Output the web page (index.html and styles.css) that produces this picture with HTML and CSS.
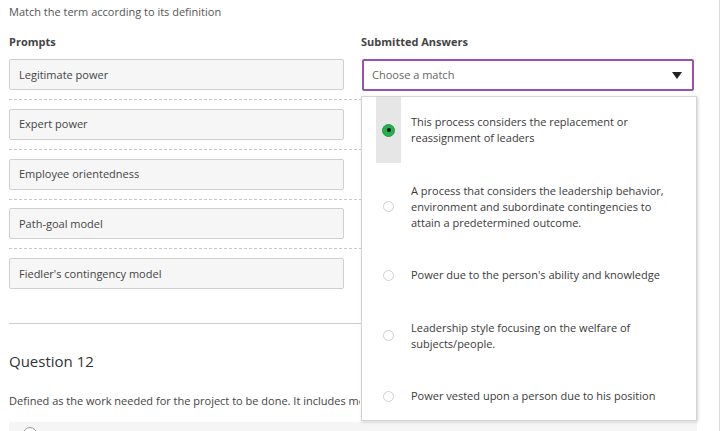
FILE: index.html
```html
<!DOCTYPE html>
<html>
<head>
<meta charset="utf-8">
<link rel="stylesheet" href="styles.css">
</head>
<body>
<div class="page">
  <p class="instr">Match the term according to its definition</p>
  <div class="match">
    <div class="heads">
      <div class="head">Prompts</div>
      <div class="head">Submitted Answers</div>
    </div>
    <div class="row">
      <div class="prompt">Legitimate power</div>
      <div class="answer">
        <div class="select">
          <span>Choose a match</span>
          <span class="arrow"></span>
        </div>
        <div class="menu">
          <div class="item selected">
            <div class="rcol"><span class="radio on"></span></div>
            <div class="itext">This process considers the replacement or reassignment of leaders</div>
          </div>
          <div class="item">
            <div class="rcol"><span class="radio"></span></div>
            <div class="itext">A process that considers the leadership behavior, environment and subordinate contingencies to attain a predetermined outcome.</div>
          </div>
          <div class="item">
            <div class="rcol"><span class="radio"></span></div>
            <div class="itext">Power due to the person's ability and knowledge</div>
          </div>
          <div class="item">
            <div class="rcol"><span class="radio"></span></div>
            <div class="itext">Leadership style focusing on the welfare of subjects/people.</div>
          </div>
          <div class="item">
            <div class="rcol"><span class="radio"></span></div>
            <div class="itext">Power vested upon a person due to his position</div>
          </div>
        </div>
      </div>
    </div>
    <div class="row"><div class="prompt">Expert power</div><div class="answer"></div></div>
    <div class="row"><div class="prompt">Employee orientedness</div><div class="answer"></div></div>
    <div class="row"><div class="prompt">Path-goal model</div><div class="answer"></div></div>
    <div class="row last"><div class="prompt">Fiedler's contingency model</div><div class="answer"></div></div>
  </div>
  <div class="rule"></div>
  <h2 class="qtitle">Question 12</h2>
  <p class="qtext">Defined as the work needed for the project to be done. It includes most of the activities needed</p>
  <div class="option"><span class="radio big"></span></div>
</div>
</body>
</html>
```

FILE: styles.css
```css
html, body {
  margin: 0;
  padding: 0;
  background: #fff;
  overflow: hidden;
}
body {
  font-family: "Open Sans", "Liberation Sans", sans-serif;
  font-size: 11px;
  line-height: 16px;
  color: #3a3a3a;
}
.page {
  width: 720px;
  height: 431px;
  padding: 4px 0 0 9px;
  border-right: 1px solid #dcdcdc;
  box-sizing: border-box;
  overflow: hidden;
}
.instr {
  margin: 0;
  color: #555;
}
.match {
  width: 688px;
  margin-top: 14px;
}
.heads {
  display: grid;
  grid-template-columns: 335px 1fr;
  column-gap: 17px;
  margin-bottom: 9px;
}
.head {
  font-weight: 700;
  color: #444;
}
.row {
  display: grid;
  grid-template-columns: 335px 1fr;
  align-items: start;
  column-gap: 17px;
  height: 31px;
  padding: 0 0 9px 0;
  border-bottom: 1px dashed #c8c8c8;
  margin-bottom: 8.75px;
}
.row.last {
  border-bottom: none;
  padding-bottom: 0;
  margin-bottom: 0;
}
.prompt {
  height: 31px;
  box-sizing: border-box;
  background: #f6f6f6;
  border: 1px solid #cfcfcf;
  border-radius: 2px;
  padding: 0 9px;
  display: flex;
  align-items: center;
  color: #444;
}
.answer {
  position: relative;
  height: 31px;
}
.select {
  margin-left: 1px;
  width: 332px;
  height: 32px;
  box-sizing: border-box;
  border: 2px solid #9a50ad;
  border-radius: 2px;
  display: flex;
  align-items: center;
  justify-content: space-between;
  padding: 0 9px 0 8px;
  color: #666;
  background: #fff;
}
.arrow {
  width: 0;
  height: 0;
  border-left: 5px solid transparent;
  border-right: 5px solid transparent;
  border-top: 7px solid #222;
  margin-right: 1px;
}
.menu {
  position: absolute;
  left: 0;
  top: 37px;
  width: 336px;
  height: 325px;
  box-sizing: border-box;
  background: #fff;
  border: 1px solid #d4d4d4;
  box-shadow: 1px 1px 3px rgba(0,0,0,0.18);
  display: flex;
  flex-direction: column;
  gap: 2.5px;
  z-index: 5;
}
.item {
  display: flex;
  align-items: stretch;
  padding-left: 14px;
  color: #3a3a3a;
}
.rcol {
  width: 25px;
  flex: none;
  display: flex;
  align-items: center;
  justify-content: center;
}
.item.selected .rcol {
  background: #e6e6e6;
}
.itext {
  padding: 17px 0;
  margin-left: 10px;
  width: 265px;
}
.radio {
  display: block;
  width: 11px;
  height: 11px;
  border: 1px solid #cfcfcf;
  border-radius: 50%;
  background: #fff;
  box-sizing: border-box;
  position: relative;
}
.radio.on {
  width: 13px;
  height: 13px;
  background: #22b04f;
  border: 1px solid #1e9a45;
}
.radio.on::after {
  content: "";
  position: absolute;
  left: 50%;
  top: 50%;
  width: 4px;
  height: 4px;
  margin: -2px 0 0 -2px;
  border-radius: 50%;
  background: #111;
}
.rule {
  width: 688px;
  height: 1px;
  background: #cfcfcf;
  margin-top: 34px;
}
.qtitle {
  margin: 27px 0 0 0;
  font-size: 15px;
  line-height: 20px;
  font-weight: 400;
  color: #333;
}
.qtext {
  margin: 22px 0 0 0;
  color: #444;
  white-space: nowrap;
  width: 351px;
  overflow: hidden;
}
.option {
  margin-top: 13px;
  width: 688px;
  height: 40px;
  background: #f5f5f5;
  padding: 5px 0 0 14px;
  box-sizing: border-box;
}
.radio.big {
  width: 14px;
  height: 14px;
  border: 1px solid #999;
}
```
